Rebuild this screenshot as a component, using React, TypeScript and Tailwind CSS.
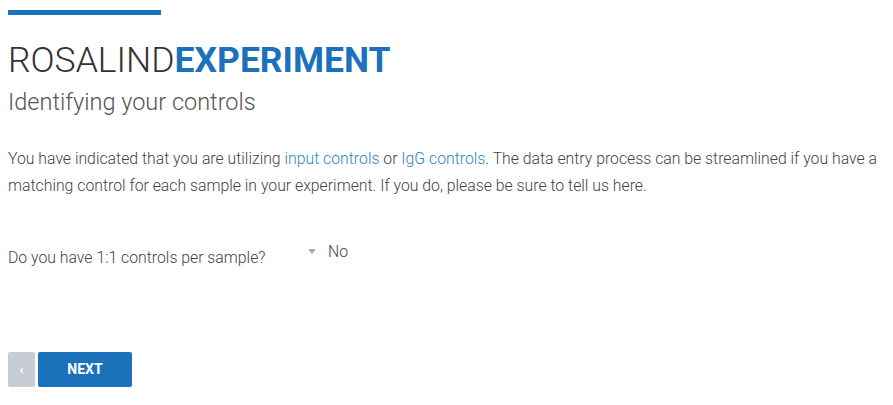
export default function App() {
  return (
    <div className="min-h-screen bg-white px-2 pt-[10px] text-[#555]" style={{ fontFamily: 'Roboto, "Noto Sans", sans-serif' }}>
      <div className="h-[5px] w-[153px] bg-[#1b72ba]" />
      <h1 className="mt-[22px] text-[35.5px] leading-[46px]">
        <span className="font-light text-[#333]">ROSALIND</span>
        <span className="font-bold text-[#1b72ba]">EXPERIMENT</span>
      </h1>
      <h2 className="mt-[4px] text-[23.5px] font-light leading-[30px] text-[#555]">Identifying your controls</h2>
      <p className="mt-[28px] text-[15.8px] font-light leading-[27px] text-[#444]">
        You have indicated that you are utilizing <span className="text-[#2b86c5]">input controls</span> or{' '}
        <span className="text-[#2b86c5]">IgG controls</span>. The data entry process can be streamlined if you have a
        matching control for each sample in your experiment. If you do, please be sure to tell us here.
      </p>
      <div className="mt-[37px] flex items-center text-[15.8px] font-light text-[#444]">
        <span className="w-[300px] pt-[10px]">Do you have 1:1 controls per sample?</span>
        <span className="flex items-center gap-[12px] pb-[2px]">
          <span className="h-0 w-0 border-x-[4px] border-t-[5px] border-x-transparent border-t-[#aaa]" />
          <span>No</span>
        </span>
      </div>
      <div className="mt-[82px] flex gap-[3px]">
        <button className="flex h-[35px] w-[27px] items-center justify-center rounded-[2px] bg-[#c7ccd6] text-[13px] font-bold leading-none text-white">‹</button>
        <button className="h-[35px] w-[94px] rounded-[2px] bg-[#1b72ba] text-[14px] font-bold text-white">NEXT</button>
      </div>
    </div>
  );
}
